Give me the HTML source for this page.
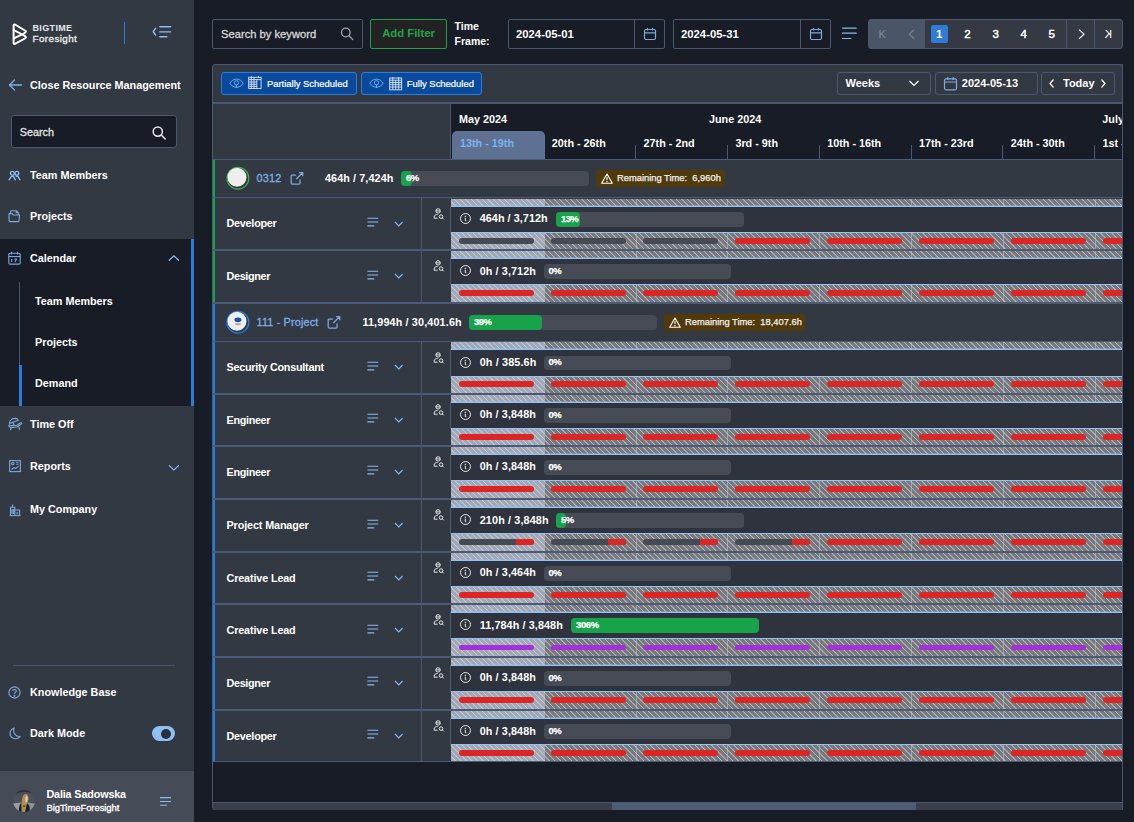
<!DOCTYPE html>
<html><head><meta charset="utf-8"><style>
html,body{margin:0;padding:0;width:1134px;height:822px;overflow:hidden;background:#171c26;font-family:"Liberation Sans", sans-serif;}
.t{position:absolute;white-space:pre;line-height:1;}
.r{position:absolute;}
</style></head><body>
<div class="r" style="left:0px;top:0px;width:194px;height:822px;background:#333943"></div><svg class="r" style="left:10.4px;top:20.6px;" width="19" height="26" viewBox="0 0 19 26"><g transform="translate(0,1.2) scale(1,0.92)" fill="none" stroke="#fff" stroke-width="2" stroke-linejoin="round" stroke-linecap="round"><path d="M3.6 3.4 C3.6 2.6 4.4 2.3 5 2.6 L15.3 9.2 C16.2 9.8 16.1 10.6 15.3 11.2 L12.3 13.3 L15.3 15.4 C16.1 16 16.1 16.8 15.3 17.4 L5 23.6 C4.3 24 3.6 23.6 3.6 22.8 Z"/><path d="M3.8 8.6 L12.3 13.3 L3.8 17.6"/></g></svg><div class="t" style="left:32.5px;top:23.78px;font-size:9px;font-weight:bold;color:#e8e8e8;letter-spacing:0.35px">BIGTIME</div><div class="t" style="left:32.5px;top:33.70px;font-size:9.8px;font-weight:normal;color:#e8e8e8;letter-spacing:0.438px;-webkit-text-stroke:0.35px #e8e8e8">Foresight</div><div class="r" style="left:124px;top:22px;width:1px;height:22px;background:#2f7bd6"></div><svg class="r" style="left:150px;top:24px;" width="24" height="15" viewBox="0 0 24 15"><g fill="none" stroke="#8ec0f5" stroke-width="1.4" stroke-linecap="round"><path d="M5.6 4.3 L3.2 7.7 L5.6 11"/><path d="M9.8 2.8 H20.6"/><path d="M9.8 7.9 H20.6"/><path d="M9.8 12.8 H16.8"/></g></svg><svg class="r" style="left:7px;top:78px;" width="17" height="14" viewBox="0 0 17 14"><g fill="none" stroke="#7eb0e6" stroke-width="1.3" stroke-linecap="round" stroke-linejoin="round"><path d="M2.5 7 H14.5"/><path d="M7.5 2 L2.5 7 L7.5 12"/></g></svg><div class="t" style="left:30px;top:80.26px;font-size:10.8px;font-weight:bold;color:#fff;">Close Resource Management</div><div class="r" style="left:11px;top:115px;width:166px;height:33px;background:#171c26;border:1px solid #4b5872;border-radius:3px;box-sizing:border-box"></div><div class="t" style="left:19.7px;top:126.86px;font-size:10.8px;font-weight:normal;color:#e6e6e6;-webkit-text-stroke:0.3px #e6e6e6">Search</div><svg class="r" style="left:150px;top:124px;" width="18" height="17" viewBox="0 0 18 17"><g fill="none" stroke="#e6e6e6" stroke-width="1.5" stroke-linecap="round"><circle cx="7.8" cy="7.6" r="4.6"/><path d="M11.2 11 L15.2 15"/></g></svg><svg class="r" style="left:8px;top:170px;" width="13" height="11" viewBox="0 0 13 11"><g fill="none" stroke="#8ec0f5" stroke-width="1.3" stroke-linecap="round"><circle cx="4.3" cy="3.2" r="1.9"/><circle cx="8.9" cy="3.2" r="1.9"/><path d="M1 9.8 L3.3 6.3 H5.3 L7.4 9.8"/><path d="M8.2 6.3 H9.9 L12 9.8"/></g></svg><div class="t" style="left:30px;top:170.06px;font-size:10.8px;font-weight:bold;color:#fff;">Team Members</div><svg class="r" style="left:8.3px;top:210px;" width="13" height="13" viewBox="0 0 13 13"><g fill="none" stroke="#7ea9dc" stroke-width="1.1" stroke-linejoin="round"><path d="M1 3.6 H4.2 L5.2 5 H11.6 L11 10.8 C10.9 11.3 10.6 11.6 10 11.6 H2 C1.4 11.6 1 11.2 1 10.6 Z"/><path d="M2.6 3.6 V1.6 C2.6 1 3 0.8 3.5 0.8 H8.4 L10.2 2.4 V5"/><path d="M8.2 0.8 V2.6 H10.2"/></g></svg><div class="t" style="left:30px;top:210.86px;font-size:10.8px;font-weight:bold;color:#fff;">Projects</div><div class="r" style="left:0px;top:239px;width:194px;height:167px;background:#171c26"></div><div class="r" style="left:191px;top:239px;width:3px;height:167px;background:#2f7bd6"></div><svg class="r" style="left:8px;top:251px;" width="13" height="14" viewBox="0 0 13 14"><g fill="none" stroke="#7ea9dc" stroke-width="1.1"><rect x="0.8" y="2.3" width="11.4" height="10.8" rx="1.2"/><path d="M0.8 5.5 H12.2"/><path d="M3.5 0.8 V3.5 M9.5 0.8 V3.5"/><path d="M3.7 8 V11 M6.2 8 H8.5 L7 11"/></g></svg><div class="t" style="left:30px;top:252.86px;font-size:10.8px;font-weight:bold;color:#fff;">Calendar</div><svg class="r" style="left:166px;top:253px;" width="15" height="9" viewBox="0 0 15 9"><path d="M3.2 7.3 L7.9 2.9 L12.6 7.3" fill="none" stroke="#86bbf0" stroke-width="1.2" stroke-linecap="round"/></svg><div class="r" style="left:19px;top:282px;width:1px;height:124px;background:#4b5872"></div><div class="r" style="left:19px;top:365px;width:3px;height:41px;background:#2f7bd6"></div><div class="t" style="left:35px;top:295.86px;font-size:10.8px;font-weight:bold;color:#fff;">Team Members</div><div class="t" style="left:35px;top:337.46px;font-size:10.8px;font-weight:bold;color:#fff;">Projects</div><div class="t" style="left:35px;top:377.86px;font-size:10.8px;font-weight:bold;color:#fff;">Demand</div><svg class="r" style="left:7.6px;top:417px;" width="15" height="14" viewBox="0 0 15 14"><g fill="none" stroke="#7ea9dc" stroke-width="1.1" stroke-linecap="round" stroke-linejoin="round"><path d="M1.5 6.5 C1.2 3 5 0.6 8.6 1.6 C9.8 2 10.3 2.8 10 3.6 Z"/><path d="M4.5 5.2 L6.2 8"/><path d="M0.8 8.3 C1.2 10.5 3 10.8 5 10.5 L9.5 9.8 L13.8 6.6 C13.5 5.8 12.8 5.6 12 6 L9 8.2 L4 8.6 C3 8.7 2 8.4 1.6 7.8"/><path d="M3 10.7 L2.6 12.8 M11 9.8 L11.4 12.4"/></g></svg><div class="t" style="left:30px;top:419.16px;font-size:10.8px;font-weight:bold;color:#fff;">Time Off</div><svg class="r" style="left:8.6px;top:460.2px;" width="13" height="13" viewBox="0 0 13 13"><g fill="none" stroke="#7ea9dc" stroke-width="1.1"><rect x="0.6" y="0.6" width="10.8" height="11"/><path d="M2.5 9.5 L4.8 7.6 L6.6 8.6 L9.5 6.2"/><circle cx="3.8" cy="3.5" r="1.2"/><path d="M7.3 2.5 H9.5 M7.3 4.3 H9.5"/></g></svg><div class="t" style="left:30px;top:460.86px;font-size:10.8px;font-weight:bold;color:#fff;">Reports</div><svg class="r" style="left:166px;top:462.6px;" width="15" height="9" viewBox="0 0 15 9"><path d="M3.2 2.6 L7.9 7 L12.6 2.6" fill="none" stroke="#86bbf0" stroke-width="1.2" stroke-linecap="round"/></svg><svg class="r" style="left:8.6px;top:503.6px;" width="13" height="13" viewBox="0 0 13 13"><g fill="none" stroke="#7ea9dc" stroke-width="1.1"><path d="M0.5 11.6 H11.5"/><path d="M1.5 11.6 V3.2 H5.8 V11.6"/><path d="M3.6 3.2 V0.6"/><path d="M5.8 6 H10.6 V11.6"/><path d="M3 5 V10 M4.4 5 V10 M8.2 8 V10.5"/></g></svg><div class="t" style="left:30px;top:503.86px;font-size:10.8px;font-weight:bold;color:#fff;">My Company</div><div class="r" style="left:13px;top:665px;width:162px;height:1px;background:#4b5872"></div><svg class="r" style="left:8px;top:686px;" width="13" height="13" viewBox="0 0 13 13"><g fill="none" stroke="#7ea9dc" stroke-width="1.1"><circle cx="6.5" cy="6.5" r="5.6"/><path d="M4.7 5 C4.7 3 8.3 3 8.3 5 C8.3 6.4 6.5 6.4 6.5 8"/><circle cx="6.5" cy="9.7" r="0.4" fill="#7ea9dc"/></g></svg><div class="t" style="left:30px;top:686.86px;font-size:10.8px;font-weight:bold;color:#fff;">Knowledge Base</div><svg class="r" style="left:8px;top:727px;" width="13" height="13" viewBox="0 0 13 13"><g fill="none" stroke="#7ea9dc" stroke-width="1.1"><path d="M6 1 C2 2 0.8 7 3.5 10.2 C6 12.8 10.5 12 12 9.5 C8 10 4.5 6 6 1 Z"/></g></svg><div class="t" style="left:30px;top:727.86px;font-size:10.8px;font-weight:bold;color:#fff;">Dark Mode</div><div class="r" style="left:152px;top:726px;width:23px;height:15px;background:#8ec0f5;border-radius:8px"></div><div class="r" style="left:161px;top:728.5px;width:10px;height:10px;background:#2b313b;border-radius:50%"></div><div class="r" style="left:0px;top:771px;width:194px;height:51px;background:#464c57"></div><svg class="r" style="left:13px;top:790px;" width="22" height="22" viewBox="0 0 22 22"><defs><clipPath id="av"><circle cx="11" cy="11" r="11"/></clipPath></defs><g clip-path="url(#av)"><rect width="22" height="22" fill="#4a4f59"/><path d="M2 4.5 C6 1.5 15 1 20 4 L20 0 L2 0 Z" fill="#2c3038"/><path d="M0 13.5 L7.5 12.5 L6.5 22 L0 22 Z" fill="#979da6"/><path d="M22 13.5 L14.5 12.5 L15.5 22 L22 22 Z" fill="#8d939b"/><path d="M5.5 22 L6.5 15.5 C7.5 13.5 9.5 13.5 10.5 14.5 L12.5 14.5 C14.5 13.5 16 14.5 16.5 16.5 L17 22 Z" fill="#1c1f25"/><path d="M12.5 4 C15 4 16 6.5 15.5 9.5 C15 12 13.5 14 13 18 L12 22 L8.5 22 L8.5 17 C8 14.5 8.6 12 9 9.5 C9.4 6.5 10.5 4.3 12.5 4 Z" fill="#ae9150"/><path d="M13.2 5.8 C14.8 6.5 15 9 14.3 11.2 C13.8 12.5 12.8 12.6 12.5 11.4 C12.1 9.5 12.3 7.3 13.2 5.8 Z" fill="#ddd0b4"/><rect x="10" y="15.5" width="2.5" height="1.3" fill="#7a2a1a"/></g></svg><div class="t" style="left:46.4px;top:788.86px;font-size:10.8px;font-weight:bold;color:#fff;letter-spacing:-0.146px;">Dalia Sadowska</div><div class="t" style="left:46.5px;top:802.96px;font-size:9.5px;font-weight:normal;color:#fff;letter-spacing:-0.080px;-webkit-text-stroke:0.3px #fff">BigTimeForesight</div><svg class="r" style="left:158px;top:795px;" width="15" height="12" viewBox="0 0 15 12"><g stroke="#86bbf0" stroke-width="1.1"><path d="M2 2.6 H13 M2 6.5 H13 M2 10.3 H9"/></g></svg><div class="r" style="left:212px;top:19px;width:151px;height:30px;border:1px solid #4b5872;border-radius:2px;box-sizing:border-box"></div><div class="t" style="left:221px;top:28.52px;font-size:11.2px;font-weight:normal;color:#d8d8d8;-webkit-text-stroke:0.3px #d8d8d8">Search by keyword</div><svg class="r" style="left:339px;top:26px;" width="16" height="16" viewBox="0 0 16 16"><g fill="none" stroke="#a0a4ab" stroke-width="1.3" stroke-linecap="round"><circle cx="6.8" cy="6.5" r="4.3"/><path d="M10 9.8 L13.8 13.6"/></g></svg><div class="r" style="left:370px;top:19px;width:77px;height:30px;background:#222222;border:1.5px solid #1fa04a;border-radius:2px;box-sizing:border-box"></div><div class="t" style="left:382.2px;top:27.53px;font-size:11.3px;font-weight:bold;color:#22a34a;">Add Filter</div><div class="t" style="left:454.6px;top:21.21px;font-size:10.5px;font-weight:bold;color:#fff;">Time</div><div class="t" style="left:454.6px;top:36.21px;font-size:10.5px;font-weight:bold;color:#fff;">Frame:</div><div class="r" style="left:508px;top:19px;width:157px;height:30px;border:1px solid #4b5872;border-radius:2px;box-sizing:border-box"></div><div class="r" style="left:634px;top:19px;width:1px;height:30px;background:#4b5872"></div><div class="t" style="left:516px;top:29.23px;font-size:11.3px;font-weight:bold;color:#fff;">2024-05-01</div><svg class="r" style="left:642.5px;top:27px;" width="14" height="14" viewBox="0 0 14 14"><g fill="none" stroke="#7ea9dc" stroke-width="1.2"><rect x="1.5" y="2.5" width="11" height="10" rx="1.5"/><path d="M1.5 5.8 H12.5 M4.5 1 V3.5 M9.5 1 V3.5"/></g></svg><div class="r" style="left:673px;top:19px;width:158px;height:30px;border:1px solid #4b5872;border-radius:2px;box-sizing:border-box"></div><div class="r" style="left:800px;top:19px;width:1px;height:30px;background:#4b5872"></div><div class="t" style="left:681px;top:29.23px;font-size:11.3px;font-weight:bold;color:#fff;">2024-05-31</div><svg class="r" style="left:808.5px;top:27px;" width="14" height="14" viewBox="0 0 14 14"><g fill="none" stroke="#7ea9dc" stroke-width="1.2"><rect x="1.5" y="2.5" width="11" height="10" rx="1.5"/><path d="M1.5 5.8 H12.5 M4.5 1 V3.5 M9.5 1 V3.5"/></g></svg><svg class="r" style="left:840px;top:25px;" width="18" height="16" viewBox="0 0 18 16"><g stroke="#86bbf0" stroke-width="1.2" stroke-linecap="round"><path d="M2.5 3.1 H16.2 M2.5 8.2 H16.2 M2.5 13.5 H11"/></g></svg><div class="r" style="left:868px;top:19px;width:255px;height:30px;background:#343944;border:1px solid #4b5872;border-radius:3px;box-sizing:border-box"></div><div class="r" style="left:869px;top:20px;width:56px;height:28px;background:#4a5568"></div><div class="t" style="left:878.5px;top:29.29px;font-size:11px;font-weight:normal;color:#858a90;">K</div><svg class="r" style="left:904px;top:27px;" width="14" height="14" viewBox="0 0 14 14"><path d="M10 3 L5.2 7.2 L10 11.5" fill="none" stroke="#7f868f" stroke-width="1.1"/></svg><div class="r" style="left:931px;top:25px;width:17px;height:18px;background:#2f7bd6;border-radius:2px"></div><div class="t" style="left:936px;top:29.07px;font-size:11.5px;font-weight:bold;color:#fff;">1</div><div class="t" style="left:964.3px;top:29.07px;font-size:11.5px;font-weight:normal;color:#fff;-webkit-text-stroke:0.45px #fff">2</div><div class="t" style="left:992.4px;top:29.07px;font-size:11.5px;font-weight:normal;color:#fff;-webkit-text-stroke:0.45px #fff">3</div><div class="t" style="left:1020.5px;top:29.07px;font-size:11.5px;font-weight:normal;color:#fff;-webkit-text-stroke:0.45px #fff">4</div><div class="t" style="left:1048.6px;top:29.07px;font-size:11.5px;font-weight:normal;color:#fff;-webkit-text-stroke:0.45px #fff">5</div><div class="r" style="left:1066px;top:20px;width:1px;height:28px;background:#4b5872"></div><div class="r" style="left:1094px;top:20px;width:1px;height:28px;background:#4b5872"></div><svg class="r" style="left:1073px;top:27px;" width="14" height="14" viewBox="0 0 14 14"><path d="M6 2.7 L11 7.2 L6 11.8" fill="none" stroke="#fff" stroke-width="1.1"/></svg><div class="t" style="left:1102px;top:29.29px;font-size:11px;font-weight:normal;color:#fff;transform:scaleX(-1);transform-origin:5px 0">K</div><div class="r" style="left:212px;top:64px;width:911px;height:746px;background:#333943;border:1px solid #4b5872;border-radius:3px;box-sizing:border-box"></div><div class="r" style="left:221px;top:72px;width:136px;height:23px;background:#0a4a9c;border:1px solid #2a7de0;border-radius:3px;box-sizing:border-box"></div><svg class="r" style="left:229.3px;top:78px;" width="15" height="11" viewBox="0 0 15 11"><g fill="none" stroke="#6aaaf0" stroke-width="1"><path d="M0.8 5.2 C4 -0.2 11 -0.2 14.2 5.2 C11 10.6 4 10.6 0.8 5.2 Z"/><circle cx="7.5" cy="4.8" r="2.1"/><path d="M7.5 6.9 V10"/></g></svg><svg class="r" style="left:247.8px;top:76.3px;" width="14" height="13" viewBox="0 0 14 13"><g fill="none" stroke="#dce6f5" stroke-width="0.9"><rect x="0.7" y="1.3" width="12.4" height="11.2"/><path d="M0.7 3.6 H13.1 M0.7 6 H8.8 M0.7 8.3 H8.8 M0.7 10.4 H8.8 M3.3 0.2 V12.5 M6 1.3 V12.5 M8.8 3.6 V12.5 M10.5 0.2 V2"/></g></svg><div class="t" style="left:266.9px;top:78.70px;font-size:9.45px;font-weight:normal;color:#fff;-webkit-text-stroke:0.2px #fff">Partially Scheduled</div><div class="r" style="left:360.5px;top:72px;width:121.5px;height:23px;background:#0a4a9c;border:1px solid #2a7de0;border-radius:3px;box-sizing:border-box"></div><svg class="r" style="left:369.3px;top:78px;" width="15" height="11" viewBox="0 0 15 11"><g fill="none" stroke="#6aaaf0" stroke-width="1"><path d="M0.8 5.2 C4 -0.2 11 -0.2 14.2 5.2 C11 10.6 4 10.6 0.8 5.2 Z"/><circle cx="7.5" cy="4.8" r="2.1"/><path d="M7.5 6.9 V10"/></g></svg><svg class="r" style="left:388.6px;top:77.3px;" width="14" height="13.5" viewBox="0 0 14 13.5"><g fill="none" stroke="#dce6f5" stroke-width="0.9"><rect x="0.7" y="1" width="12" height="11.8"/><path d="M0.7 3.2 H12.7 M0.7 5.5 H12.7 M0.7 7.7 H12.7 M0.7 10 H12.7 M3.8 0 V12.8 M6.7 3.2 V12.8 M9.7 0 V12.8"/></g></svg><div class="t" style="left:406.8px;top:78.70px;font-size:9.45px;font-weight:normal;color:#fff;-webkit-text-stroke:0.2px #fff">Fully Scheduled</div><div class="r" style="left:837px;top:72px;width:94px;height:23px;border:1px solid #4b5872;border-radius:3px;box-sizing:border-box"></div><div class="t" style="left:845.5px;top:78.19px;font-size:11px;font-weight:bold;color:#fff;">Weeks</div><svg class="r" style="left:907px;top:78px;" width="14" height="10" viewBox="0 0 14 10"><path d="M2.5 3 L7 7.5 L11.5 3" fill="none" stroke="#fff" stroke-width="1.2"/></svg><div class="r" style="left:935px;top:72px;width:103px;height:23px;border:1px solid #4b5872;border-radius:3px;box-sizing:border-box"></div><svg class="r" style="left:943px;top:76px;" width="15" height="15" viewBox="0 0 15 15"><g fill="none" stroke="#7ea9dc" stroke-width="1.2"><rect x="1.5" y="2.8" width="12" height="11" rx="1.5"/><path d="M1.5 6 H13.5 M4.8 1 V4 M10.2 1 V4"/></g></svg><div class="t" style="left:961.8px;top:78.19px;font-size:11px;font-weight:bold;color:#fff;">2024-05-13</div><div class="r" style="left:1041px;top:72px;width:74px;height:23px;border:1px solid #4b5872;border-radius:3px;box-sizing:border-box"></div><svg class="r" style="left:1046px;top:77px;" width="12" height="13" viewBox="0 0 12 13"><path d="M7.5 2.5 L4 6.5 L7.5 10.5" fill="none" stroke="#fff" stroke-width="1.2"/></svg><div class="t" style="left:1063px;top:78.19px;font-size:11px;font-weight:bold;color:#fff;">Today</div><svg class="r" style="left:1097px;top:77px;" width="12" height="13" viewBox="0 0 12 13"><path d="M4.5 2.5 L8 6.5 L4.5 10.5" fill="none" stroke="#fff" stroke-width="1.2"/></svg><div class="r" style="left:213px;top:102px;width:909px;height:2px;background:#4b5872"></div><div class="r" style="left:451px;top:104px;width:671px;height:55px;background:#171c26"></div><div class="r" style="left:450px;top:104px;width:1px;height:55px;background:#4b5872"></div><div class="r" style="left:213px;top:158.5px;width:909px;height:1px;background:#4b5872"></div><div class="t" style="left:459px;top:114.46px;font-size:10.8px;font-weight:bold;color:#fff;">May 2024</div><div class="t" style="left:709px;top:114.46px;font-size:10.8px;font-weight:bold;color:#fff;">June 2024</div><div class="t" style="left:1102.3px;top:114.46px;font-size:10.8px;font-weight:bold;color:#fff;">July</div><div class="r" style="left:452px;top:131px;width:93px;height:28px;background:#5f7193;border-radius:5px 5px 0 0"></div><div class="t" style="left:460.0px;top:137.86px;font-size:10.8px;font-weight:bold;color:#7ab4ee;">13th - 19th</div><div class="t" style="left:551.8px;top:137.86px;font-size:10.8px;font-weight:bold;color:#fff;">20th - 26th</div><div class="r" style="left:635.1px;top:145px;width:1px;height:14px;background:#4b5872"></div><div class="t" style="left:643.6px;top:137.86px;font-size:10.8px;font-weight:bold;color:#fff;">27th - 2nd</div><div class="r" style="left:726.9px;top:145px;width:1px;height:14px;background:#4b5872"></div><div class="t" style="left:735.4px;top:137.86px;font-size:10.8px;font-weight:bold;color:#fff;">3rd - 9th</div><div class="r" style="left:818.7px;top:145px;width:1px;height:14px;background:#4b5872"></div><div class="t" style="left:827.2px;top:137.86px;font-size:10.8px;font-weight:bold;color:#fff;">10th - 16th</div><div class="r" style="left:910.5px;top:145px;width:1px;height:14px;background:#4b5872"></div><div class="t" style="left:919.0px;top:137.86px;font-size:10.8px;font-weight:bold;color:#fff;">17th - 23rd</div><div class="r" style="left:1002.3px;top:145px;width:1px;height:14px;background:#4b5872"></div><div class="t" style="left:1010.8px;top:137.86px;font-size:10.8px;font-weight:bold;color:#fff;">24th - 30th</div><div class="r" style="left:1094.1px;top:145px;width:1px;height:14px;background:#4b5872"></div><div class="t" style="left:1102.6px;top:137.86px;font-size:10.8px;font-weight:bold;color:#fff;">1st - 7th</div><div class="r" style="left:213px;top:159px;width:909px;height:38.5px;background:#333943"></div><div class="r" style="left:212.5px;top:159px;width:2.5px;height:38.5px;background:#17a34a"></div><svg class="r" style="left:225px;top:165.25px;" width="26" height="26" viewBox="0 0 26 26"><circle cx="12.9" cy="13.2" r="10.9" fill="none" stroke="#3fb34a" stroke-width="1.1"/><circle cx="12" cy="12.2" r="9.5" fill="#eeefed"/></svg><div class="t" style="left:256.5px;top:172.81px;font-size:10.8px;font-weight:normal;color:#7eb0e6;letter-spacing:0.233px;-webkit-text-stroke:0.3px #7eb0e6">0312</div><div class="t" style="left:325px;top:172.81px;font-size:10.8px;font-weight:bold;color:#fff;letter-spacing:0.092px;">464h / 7,424h</div><div class="r" style="left:401px;top:171.05px;width:188px;height:15px;background:#464b56;border-radius:4px"></div><div class="r" style="left:401px;top:171.05px;width:11px;height:15px;background:#17a34a;border-radius:4px"></div><div class="t" style="left:406px;top:172.85px;font-size:9.45px;font-weight:bold;color:#fff;letter-spacing:-0.600px;-webkit-text-stroke:0.25px #fff">6%</div><div class="r" style="left:596px;top:170.25px;width:128.6px;height:16.5px;background:#503a0b;border-radius:3px"></div><svg class="r" style="left:601px;top:172.75px;" width="12" height="11" viewBox="0 0 12 11"><g fill="none" stroke="#fff" stroke-width="1.1" stroke-linejoin="round"><path d="M6 1 L11.3 10.3 H0.7 Z"/><path d="M6 4 V7"/><circle cx="6" cy="8.6" r="0.25" fill="#fff"/></g></svg><div class="t" style="left:617px;top:173.74px;font-size:9.35px;font-weight:normal;color:#f2f2f2;-webkit-text-stroke:0.25px #f2f2f2">Remaining Time:&nbsp; 6,960h</div><svg class="r" style="left:289.5px;top:170.5px;" width="14" height="14" viewBox="0 0 14 14"><g fill="none" stroke="#7ea9dc" stroke-width="1.25" stroke-linecap="round" stroke-linejoin="round"><path d="M5.5 4 H2.2 C1.6 4 1.2 4.4 1.2 5 V12 C1.2 12.6 1.6 13 2.2 13 H9 C9.6 13 10 12.6 10 12 V8.8"/><path d="M6.5 7.7 L12.5 1.8 M9.5 1.5 H12.8 V4.8"/></g></svg><div class="r" style="left:213px;top:197.9px;width:909px;height:52.1px;background:#333943"></div><div class="r" style="left:212.5px;top:197.9px;width:2.5px;height:52.1px;background:#17a34a"></div><div class="t" style="left:226.5px;top:218.16px;font-size:10.8px;font-weight:bold;color:#fff;letter-spacing:-0.237px;">Developer</div><svg class="r" style="left:366.6px;top:217.4px;" width="12" height="11" viewBox="0 0 12 11"><g stroke="#86bbf0" stroke-width="1.1"><path d="M0.4 1.2 H11.2 M0.4 5.05 H11.2 M0.4 8.9 H7.2"/></g></svg><svg class="r" style="left:394.2px;top:220.70000000000002px;" width="11" height="7" viewBox="0 0 11 7"><path d="M1 1 L4.8 4.9 L8.6 1" fill="none" stroke="#86bbf0" stroke-width="1.1"/></svg><div class="r" style="left:421px;top:197.9px;width:1px;height:52.1px;background:#4b5872"></div><div class="r" style="left:450.5px;top:197.9px;width:1px;height:52.1px;background:#4b5872"></div><svg class="r" style="left:433px;top:208.3px;" width="12" height="12" viewBox="0 0 12 12"><g fill="none" stroke="#e6e6e6" stroke-width="1"><circle cx="5.05" cy="2.9" r="2.2"/><path d="M2.9 2.9 H7.2"/><path d="M1.2 10.2 V9 C1.2 7.3 2.6 6.5 4.6 6.5"/><path d="M1.2 10.2 H4.6"/><circle cx="8" cy="8.6" r="1.8"/><path d="M9.3 9.9 L10.7 11.3"/></g></svg><div class="r" style="left:451px;top:198.65px;width:94px;height:7.1px;background:repeating-linear-gradient(45deg, #a0a8b7 0px, #a0a8b7 2.6px, #c6c9cf 3.0px, #c6c9cf 3.5px, #a0a8b7 3.93px)"></div><div class="r" style="left:545px;top:198.65px;width:577px;height:7.1px;background:repeating-linear-gradient(45deg, #76787d 0px, #76787d 2.6px, #b6b6b7 3.0px, #b6b6b7 3.5px, #76787d 3.93px)"></div><div class="r" style="left:635.6px;top:198.65px;width:1px;height:7.1px;background:rgba(200,212,235,0.45)"></div><div class="r" style="left:727.4px;top:198.65px;width:1px;height:7.1px;background:rgba(200,212,235,0.45)"></div><div class="r" style="left:819.2px;top:198.65px;width:1px;height:7.1px;background:rgba(200,212,235,0.45)"></div><div class="r" style="left:911.0px;top:198.65px;width:1px;height:7.1px;background:rgba(200,212,235,0.45)"></div><div class="r" style="left:1002.8px;top:198.65px;width:1px;height:7.1px;background:rgba(200,212,235,0.45)"></div><div class="r" style="left:1094.6px;top:198.65px;width:1px;height:7.1px;background:rgba(200,212,235,0.45)"></div><div class="r" style="left:451px;top:205.75px;width:671px;height:27.3px;background:#2e333d;border-top:1px solid #8ec3f8;border-bottom:1px solid #8ec3f8;box-sizing:border-box;box-shadow:0 -0.5px 0 0.3px rgba(142,195,248,0.5), 0 0.5px 0 0.3px rgba(142,195,248,0.5)"></div><div class="r" style="left:451px;top:233.05px;width:94px;height:16.200000000000003px;background:repeating-linear-gradient(45deg, #a0a8b7 0px, #a0a8b7 2.6px, #c6c9cf 3.0px, #c6c9cf 3.5px, #a0a8b7 3.93px)"></div><div class="r" style="left:545px;top:233.05px;width:577px;height:16.200000000000003px;background:repeating-linear-gradient(45deg, #76787d 0px, #76787d 2.6px, #b6b6b7 3.0px, #b6b6b7 3.5px, #76787d 3.93px)"></div><div class="r" style="left:635.6px;top:233.05px;width:1px;height:16.200000000000003px;background:rgba(200,212,235,0.45)"></div><div class="r" style="left:727.4px;top:233.05px;width:1px;height:16.200000000000003px;background:rgba(200,212,235,0.45)"></div><div class="r" style="left:819.2px;top:233.05px;width:1px;height:16.200000000000003px;background:rgba(200,212,235,0.45)"></div><div class="r" style="left:911.0px;top:233.05px;width:1px;height:16.200000000000003px;background:rgba(200,212,235,0.45)"></div><div class="r" style="left:1002.8px;top:233.05px;width:1px;height:16.200000000000003px;background:rgba(200,212,235,0.45)"></div><div class="r" style="left:1094.6px;top:233.05px;width:1px;height:16.200000000000003px;background:rgba(200,212,235,0.45)"></div><svg class="r" style="left:459px;top:212.3px;" width="13" height="13" viewBox="0 0 13 13"><g fill="none" stroke="#e8e8e8" stroke-width="1"><circle cx="6.5" cy="6.5" r="5"/><path d="M6.3 5.8 V8.6 L7.3 8.8"/><circle cx="6.3" cy="4.3" r="0.35" fill="#e8e8e8"/></g></svg><div class="t" style="left:479.7px;top:213.46px;font-size:10.8px;font-weight:bold;color:#fff;letter-spacing:0.058px;">464h / 3,712h</div><div class="r" style="left:556px;top:212.1px;width:187.5px;height:14.6px;background:#464b56;border-radius:4px"></div><div class="r" style="left:556px;top:212.1px;width:24px;height:14.6px;background:#17a34a;border-radius:4px"></div><div class="t" style="left:561px;top:213.90px;font-size:9.45px;font-weight:bold;color:#fff;letter-spacing:-0.600px;-webkit-text-stroke:0.25px #fff">13%</div><div class="r" style="left:458.8px;top:237.9px;width:75.2px;height:6px;background:#454a55;border-radius:3px"></div><div class="r" style="left:550.8px;top:237.9px;width:75.2px;height:6px;background:#454a55;border-radius:3px"></div><div class="r" style="left:642.8px;top:237.9px;width:75.2px;height:6px;background:#454a55;border-radius:3px"></div><div class="r" style="left:734.8px;top:237.9px;width:75.2px;height:6px;background:#dc2626;border-radius:3px"></div><div class="r" style="left:826.8px;top:237.9px;width:75.2px;height:6px;background:#dc2626;border-radius:3px"></div><div class="r" style="left:918.8px;top:237.9px;width:75.2px;height:6px;background:#dc2626;border-radius:3px"></div><div class="r" style="left:1010.8px;top:237.9px;width:75.2px;height:6px;background:#dc2626;border-radius:3px"></div><div class="r" style="left:1102.8px;top:237.9px;width:19.200000000000045px;height:6px;background:#dc2626;border-radius:3px 0 0 3px"></div><div class="r" style="left:213px;top:250px;width:909px;height:52.9px;background:#333943"></div><div class="r" style="left:212.5px;top:250px;width:2.5px;height:52.9px;background:#17a34a"></div><div class="t" style="left:226.5px;top:270.86px;font-size:10.8px;font-weight:bold;color:#fff;letter-spacing:-0.314px;">Designer</div><svg class="r" style="left:366.6px;top:269.5px;" width="12" height="11" viewBox="0 0 12 11"><g stroke="#86bbf0" stroke-width="1.1"><path d="M0.4 1.2 H11.2 M0.4 5.05 H11.2 M0.4 8.9 H7.2"/></g></svg><svg class="r" style="left:394.2px;top:272.8px;" width="11" height="7" viewBox="0 0 11 7"><path d="M1 1 L4.8 4.9 L8.6 1" fill="none" stroke="#86bbf0" stroke-width="1.1"/></svg><div class="r" style="left:421px;top:250px;width:1px;height:52.9px;background:#4b5872"></div><div class="r" style="left:450.5px;top:250px;width:1px;height:52.9px;background:#4b5872"></div><svg class="r" style="left:433px;top:260.4px;" width="12" height="12" viewBox="0 0 12 12"><g fill="none" stroke="#e6e6e6" stroke-width="1"><circle cx="5.05" cy="2.9" r="2.2"/><path d="M2.9 2.9 H7.2"/><path d="M1.2 10.2 V9 C1.2 7.3 2.6 6.5 4.6 6.5"/><path d="M1.2 10.2 H4.6"/><circle cx="8" cy="8.6" r="1.8"/><path d="M9.3 9.9 L10.7 11.3"/></g></svg><div class="r" style="left:451px;top:250.75px;width:94px;height:7.1px;background:repeating-linear-gradient(45deg, #a0a8b7 0px, #a0a8b7 2.6px, #c6c9cf 3.0px, #c6c9cf 3.5px, #a0a8b7 3.93px)"></div><div class="r" style="left:545px;top:250.75px;width:577px;height:7.1px;background:repeating-linear-gradient(45deg, #76787d 0px, #76787d 2.6px, #b6b6b7 3.0px, #b6b6b7 3.5px, #76787d 3.93px)"></div><div class="r" style="left:635.6px;top:250.75px;width:1px;height:7.1px;background:rgba(200,212,235,0.45)"></div><div class="r" style="left:727.4px;top:250.75px;width:1px;height:7.1px;background:rgba(200,212,235,0.45)"></div><div class="r" style="left:819.2px;top:250.75px;width:1px;height:7.1px;background:rgba(200,212,235,0.45)"></div><div class="r" style="left:911.0px;top:250.75px;width:1px;height:7.1px;background:rgba(200,212,235,0.45)"></div><div class="r" style="left:1002.8px;top:250.75px;width:1px;height:7.1px;background:rgba(200,212,235,0.45)"></div><div class="r" style="left:1094.6px;top:250.75px;width:1px;height:7.1px;background:rgba(200,212,235,0.45)"></div><div class="r" style="left:451px;top:257.85px;width:671px;height:27.3px;background:#2e333d;border-top:1px solid #8ec3f8;border-bottom:1px solid #8ec3f8;box-sizing:border-box;box-shadow:0 -0.5px 0 0.3px rgba(142,195,248,0.5), 0 0.5px 0 0.3px rgba(142,195,248,0.5)"></div><div class="r" style="left:451px;top:285.15px;width:94px;height:17.0px;background:repeating-linear-gradient(45deg, #a0a8b7 0px, #a0a8b7 2.6px, #c6c9cf 3.0px, #c6c9cf 3.5px, #a0a8b7 3.93px)"></div><div class="r" style="left:545px;top:285.15px;width:577px;height:17.0px;background:repeating-linear-gradient(45deg, #76787d 0px, #76787d 2.6px, #b6b6b7 3.0px, #b6b6b7 3.5px, #76787d 3.93px)"></div><div class="r" style="left:635.6px;top:285.15px;width:1px;height:17.0px;background:rgba(200,212,235,0.45)"></div><div class="r" style="left:727.4px;top:285.15px;width:1px;height:17.0px;background:rgba(200,212,235,0.45)"></div><div class="r" style="left:819.2px;top:285.15px;width:1px;height:17.0px;background:rgba(200,212,235,0.45)"></div><div class="r" style="left:911.0px;top:285.15px;width:1px;height:17.0px;background:rgba(200,212,235,0.45)"></div><div class="r" style="left:1002.8px;top:285.15px;width:1px;height:17.0px;background:rgba(200,212,235,0.45)"></div><div class="r" style="left:1094.6px;top:285.15px;width:1px;height:17.0px;background:rgba(200,212,235,0.45)"></div><svg class="r" style="left:459px;top:264.4px;" width="13" height="13" viewBox="0 0 13 13"><g fill="none" stroke="#e8e8e8" stroke-width="1"><circle cx="6.5" cy="6.5" r="5"/><path d="M6.3 5.8 V8.6 L7.3 8.8"/><circle cx="6.3" cy="4.3" r="0.35" fill="#e8e8e8"/></g></svg><div class="t" style="left:479.7px;top:265.56px;font-size:10.8px;font-weight:bold;color:#fff;letter-spacing:0.100px;">0h / 3,712h</div><div class="r" style="left:543.5px;top:264.2px;width:187.5px;height:14.6px;background:#464b56;border-radius:4px"></div><div class="t" style="left:548.5px;top:266.00px;font-size:9.45px;font-weight:bold;color:#fff;letter-spacing:-0.600px;-webkit-text-stroke:0.25px #fff">0%</div><div class="r" style="left:458.8px;top:290px;width:75.2px;height:6px;background:#dc2626;border-radius:3px"></div><div class="r" style="left:550.8px;top:290px;width:75.2px;height:6px;background:#dc2626;border-radius:3px"></div><div class="r" style="left:642.8px;top:290px;width:75.2px;height:6px;background:#dc2626;border-radius:3px"></div><div class="r" style="left:734.8px;top:290px;width:75.2px;height:6px;background:#dc2626;border-radius:3px"></div><div class="r" style="left:826.8px;top:290px;width:75.2px;height:6px;background:#dc2626;border-radius:3px"></div><div class="r" style="left:918.8px;top:290px;width:75.2px;height:6px;background:#dc2626;border-radius:3px"></div><div class="r" style="left:1010.8px;top:290px;width:75.2px;height:6px;background:#dc2626;border-radius:3px"></div><div class="r" style="left:1102.8px;top:290px;width:19.200000000000045px;height:6px;background:#dc2626;border-radius:3px 0 0 3px"></div><div class="r" style="left:213px;top:302.9px;width:909px;height:38.55px;background:#333943"></div><div class="r" style="left:212.5px;top:302.9px;width:2.5px;height:38.55px;background:#1f7de6"></div><svg class="r" style="left:225px;top:309.17499999999995px;" width="26" height="26" viewBox="0 0 26 26"><circle cx="12.9" cy="13.2" r="10.9" fill="none" stroke="#1f7de6" stroke-width="1.3"/><circle cx="12" cy="12.2" r="9.5" fill="#eeefed"/><ellipse cx="12.9" cy="10.8" rx="3.5" ry="2.4" fill="#1b4fb5"/><rect x="10.3" y="14.3" width="5.5" height="1.8" fill="#a8aaad"/></svg><div class="t" style="left:256.5px;top:316.73px;font-size:10.8px;font-weight:normal;color:#7eb0e6;letter-spacing:0.183px;-webkit-text-stroke:0.3px #7eb0e6">111 - Project</div><div class="t" style="left:362.4px;top:316.73px;font-size:10.8px;font-weight:bold;color:#fff;letter-spacing:0.144px;">11,994h / 30,401.6h</div><div class="r" style="left:469px;top:314.97499999999997px;width:188px;height:15px;background:#464b56;border-radius:4px"></div><div class="r" style="left:469px;top:314.97499999999997px;width:73px;height:15px;background:#17a34a;border-radius:4px"></div><div class="t" style="left:474px;top:316.78px;font-size:9.45px;font-weight:bold;color:#fff;letter-spacing:-0.500px;-webkit-text-stroke:0.25px #fff">39%</div><div class="r" style="left:664px;top:314.17499999999995px;width:140.5px;height:16.5px;background:#503a0b;border-radius:3px"></div><svg class="r" style="left:669px;top:316.67499999999995px;" width="12" height="11" viewBox="0 0 12 11"><g fill="none" stroke="#fff" stroke-width="1.1" stroke-linejoin="round"><path d="M6 1 L11.3 10.3 H0.7 Z"/><path d="M6 4 V7"/><circle cx="6" cy="8.6" r="0.25" fill="#fff"/></g></svg><div class="t" style="left:685px;top:317.66px;font-size:9.35px;font-weight:normal;color:#f2f2f2;-webkit-text-stroke:0.25px #f2f2f2">Remaining Time:&nbsp; 18,407.6h</div><svg class="r" style="left:326.5px;top:314.9px;" width="14" height="14" viewBox="0 0 14 14"><g fill="none" stroke="#7ea9dc" stroke-width="1.25" stroke-linecap="round" stroke-linejoin="round"><path d="M5.5 4 H2.2 C1.6 4 1.2 4.4 1.2 5 V12 C1.2 12.6 1.6 13 2.2 13 H9 C9.6 13 10 12.6 10 12 V8.8"/><path d="M6.5 7.7 L12.5 1.8 M9.5 1.5 H12.8 V4.8"/></g></svg><div class="r" style="left:213px;top:341.45px;width:909px;height:52.44999999999999px;background:#333943"></div><div class="r" style="left:212.5px;top:341.45px;width:2.5px;height:52.44999999999999px;background:#1f7de6"></div><div class="t" style="left:226.5px;top:362.31px;font-size:10.8px;font-weight:bold;color:#fff;letter-spacing:-0.239px;">Security Consultant</div><svg class="r" style="left:366.6px;top:360.95px;" width="12" height="11" viewBox="0 0 12 11"><g stroke="#86bbf0" stroke-width="1.1"><path d="M0.4 1.2 H11.2 M0.4 5.05 H11.2 M0.4 8.9 H7.2"/></g></svg><svg class="r" style="left:394.2px;top:364.25px;" width="11" height="7" viewBox="0 0 11 7"><path d="M1 1 L4.8 4.9 L8.6 1" fill="none" stroke="#86bbf0" stroke-width="1.1"/></svg><div class="r" style="left:421px;top:341.45px;width:1px;height:52.44999999999999px;background:#4b5872"></div><div class="r" style="left:450.5px;top:341.45px;width:1px;height:52.44999999999999px;background:#4b5872"></div><svg class="r" style="left:433px;top:351.84999999999997px;" width="12" height="12" viewBox="0 0 12 12"><g fill="none" stroke="#e6e6e6" stroke-width="1"><circle cx="5.05" cy="2.9" r="2.2"/><path d="M2.9 2.9 H7.2"/><path d="M1.2 10.2 V9 C1.2 7.3 2.6 6.5 4.6 6.5"/><path d="M1.2 10.2 H4.6"/><circle cx="8" cy="8.6" r="1.8"/><path d="M9.3 9.9 L10.7 11.3"/></g></svg><div class="r" style="left:451px;top:342.2px;width:94px;height:7.1px;background:repeating-linear-gradient(45deg, #a0a8b7 0px, #a0a8b7 2.6px, #c6c9cf 3.0px, #c6c9cf 3.5px, #a0a8b7 3.93px)"></div><div class="r" style="left:545px;top:342.2px;width:577px;height:7.1px;background:repeating-linear-gradient(45deg, #76787d 0px, #76787d 2.6px, #b6b6b7 3.0px, #b6b6b7 3.5px, #76787d 3.93px)"></div><div class="r" style="left:635.6px;top:342.2px;width:1px;height:7.1px;background:rgba(200,212,235,0.45)"></div><div class="r" style="left:727.4px;top:342.2px;width:1px;height:7.1px;background:rgba(200,212,235,0.45)"></div><div class="r" style="left:819.2px;top:342.2px;width:1px;height:7.1px;background:rgba(200,212,235,0.45)"></div><div class="r" style="left:911.0px;top:342.2px;width:1px;height:7.1px;background:rgba(200,212,235,0.45)"></div><div class="r" style="left:1002.8px;top:342.2px;width:1px;height:7.1px;background:rgba(200,212,235,0.45)"></div><div class="r" style="left:1094.6px;top:342.2px;width:1px;height:7.1px;background:rgba(200,212,235,0.45)"></div><div class="r" style="left:451px;top:349.3px;width:671px;height:27.3px;background:#2e333d;border-top:1px solid #8ec3f8;border-bottom:1px solid #8ec3f8;box-sizing:border-box;box-shadow:0 -0.5px 0 0.3px rgba(142,195,248,0.5), 0 0.5px 0 0.3px rgba(142,195,248,0.5)"></div><div class="r" style="left:451px;top:376.59999999999997px;width:94px;height:16.54999999999999px;background:repeating-linear-gradient(45deg, #a0a8b7 0px, #a0a8b7 2.6px, #c6c9cf 3.0px, #c6c9cf 3.5px, #a0a8b7 3.93px)"></div><div class="r" style="left:545px;top:376.59999999999997px;width:577px;height:16.54999999999999px;background:repeating-linear-gradient(45deg, #76787d 0px, #76787d 2.6px, #b6b6b7 3.0px, #b6b6b7 3.5px, #76787d 3.93px)"></div><div class="r" style="left:635.6px;top:376.59999999999997px;width:1px;height:16.54999999999999px;background:rgba(200,212,235,0.45)"></div><div class="r" style="left:727.4px;top:376.59999999999997px;width:1px;height:16.54999999999999px;background:rgba(200,212,235,0.45)"></div><div class="r" style="left:819.2px;top:376.59999999999997px;width:1px;height:16.54999999999999px;background:rgba(200,212,235,0.45)"></div><div class="r" style="left:911.0px;top:376.59999999999997px;width:1px;height:16.54999999999999px;background:rgba(200,212,235,0.45)"></div><div class="r" style="left:1002.8px;top:376.59999999999997px;width:1px;height:16.54999999999999px;background:rgba(200,212,235,0.45)"></div><div class="r" style="left:1094.6px;top:376.59999999999997px;width:1px;height:16.54999999999999px;background:rgba(200,212,235,0.45)"></div><svg class="r" style="left:459px;top:355.84999999999997px;" width="13" height="13" viewBox="0 0 13 13"><g fill="none" stroke="#e8e8e8" stroke-width="1"><circle cx="6.5" cy="6.5" r="5"/><path d="M6.3 5.8 V8.6 L7.3 8.8"/><circle cx="6.3" cy="4.3" r="0.35" fill="#e8e8e8"/></g></svg><div class="t" style="left:479.7px;top:357.01px;font-size:10.8px;font-weight:bold;color:#fff;letter-spacing:0.140px;">0h / 385.6h</div><div class="r" style="left:543.5px;top:355.65px;width:187.5px;height:14.6px;background:#464b56;border-radius:4px"></div><div class="t" style="left:548.5px;top:357.45px;font-size:9.45px;font-weight:bold;color:#fff;letter-spacing:-0.600px;-webkit-text-stroke:0.25px #fff">0%</div><div class="r" style="left:458.8px;top:381.45px;width:75.2px;height:6px;background:#dc2626;border-radius:3px"></div><div class="r" style="left:550.8px;top:381.45px;width:75.2px;height:6px;background:#dc2626;border-radius:3px"></div><div class="r" style="left:642.8px;top:381.45px;width:75.2px;height:6px;background:#dc2626;border-radius:3px"></div><div class="r" style="left:734.8px;top:381.45px;width:75.2px;height:6px;background:#dc2626;border-radius:3px"></div><div class="r" style="left:826.8px;top:381.45px;width:75.2px;height:6px;background:#dc2626;border-radius:3px"></div><div class="r" style="left:918.8px;top:381.45px;width:75.2px;height:6px;background:#dc2626;border-radius:3px"></div><div class="r" style="left:1010.8px;top:381.45px;width:75.2px;height:6px;background:#dc2626;border-radius:3px"></div><div class="r" style="left:1102.8px;top:381.45px;width:19.200000000000045px;height:6px;background:#dc2626;border-radius:3px 0 0 3px"></div><div class="r" style="left:213px;top:393.9px;width:909px;height:52.0px;background:#333943"></div><div class="r" style="left:212.5px;top:393.9px;width:2.5px;height:52.0px;background:#1f7de6"></div><div class="t" style="left:226.5px;top:414.76px;font-size:10.8px;font-weight:bold;color:#fff;letter-spacing:-0.314px;">Engineer</div><svg class="r" style="left:366.6px;top:413.4px;" width="12" height="11" viewBox="0 0 12 11"><g stroke="#86bbf0" stroke-width="1.1"><path d="M0.4 1.2 H11.2 M0.4 5.05 H11.2 M0.4 8.9 H7.2"/></g></svg><svg class="r" style="left:394.2px;top:416.7px;" width="11" height="7" viewBox="0 0 11 7"><path d="M1 1 L4.8 4.9 L8.6 1" fill="none" stroke="#86bbf0" stroke-width="1.1"/></svg><div class="r" style="left:421px;top:393.9px;width:1px;height:52.0px;background:#4b5872"></div><div class="r" style="left:450.5px;top:393.9px;width:1px;height:52.0px;background:#4b5872"></div><svg class="r" style="left:433px;top:404.29999999999995px;" width="12" height="12" viewBox="0 0 12 12"><g fill="none" stroke="#e6e6e6" stroke-width="1"><circle cx="5.05" cy="2.9" r="2.2"/><path d="M2.9 2.9 H7.2"/><path d="M1.2 10.2 V9 C1.2 7.3 2.6 6.5 4.6 6.5"/><path d="M1.2 10.2 H4.6"/><circle cx="8" cy="8.6" r="1.8"/><path d="M9.3 9.9 L10.7 11.3"/></g></svg><div class="r" style="left:451px;top:394.65px;width:94px;height:7.1px;background:repeating-linear-gradient(45deg, #a0a8b7 0px, #a0a8b7 2.6px, #c6c9cf 3.0px, #c6c9cf 3.5px, #a0a8b7 3.93px)"></div><div class="r" style="left:545px;top:394.65px;width:577px;height:7.1px;background:repeating-linear-gradient(45deg, #76787d 0px, #76787d 2.6px, #b6b6b7 3.0px, #b6b6b7 3.5px, #76787d 3.93px)"></div><div class="r" style="left:635.6px;top:394.65px;width:1px;height:7.1px;background:rgba(200,212,235,0.45)"></div><div class="r" style="left:727.4px;top:394.65px;width:1px;height:7.1px;background:rgba(200,212,235,0.45)"></div><div class="r" style="left:819.2px;top:394.65px;width:1px;height:7.1px;background:rgba(200,212,235,0.45)"></div><div class="r" style="left:911.0px;top:394.65px;width:1px;height:7.1px;background:rgba(200,212,235,0.45)"></div><div class="r" style="left:1002.8px;top:394.65px;width:1px;height:7.1px;background:rgba(200,212,235,0.45)"></div><div class="r" style="left:1094.6px;top:394.65px;width:1px;height:7.1px;background:rgba(200,212,235,0.45)"></div><div class="r" style="left:451px;top:401.75px;width:671px;height:27.3px;background:#2e333d;border-top:1px solid #8ec3f8;border-bottom:1px solid #8ec3f8;box-sizing:border-box;box-shadow:0 -0.5px 0 0.3px rgba(142,195,248,0.5), 0 0.5px 0 0.3px rgba(142,195,248,0.5)"></div><div class="r" style="left:451px;top:429.04999999999995px;width:94px;height:16.1px;background:repeating-linear-gradient(45deg, #a0a8b7 0px, #a0a8b7 2.6px, #c6c9cf 3.0px, #c6c9cf 3.5px, #a0a8b7 3.93px)"></div><div class="r" style="left:545px;top:429.04999999999995px;width:577px;height:16.1px;background:repeating-linear-gradient(45deg, #76787d 0px, #76787d 2.6px, #b6b6b7 3.0px, #b6b6b7 3.5px, #76787d 3.93px)"></div><div class="r" style="left:635.6px;top:429.04999999999995px;width:1px;height:16.1px;background:rgba(200,212,235,0.45)"></div><div class="r" style="left:727.4px;top:429.04999999999995px;width:1px;height:16.1px;background:rgba(200,212,235,0.45)"></div><div class="r" style="left:819.2px;top:429.04999999999995px;width:1px;height:16.1px;background:rgba(200,212,235,0.45)"></div><div class="r" style="left:911.0px;top:429.04999999999995px;width:1px;height:16.1px;background:rgba(200,212,235,0.45)"></div><div class="r" style="left:1002.8px;top:429.04999999999995px;width:1px;height:16.1px;background:rgba(200,212,235,0.45)"></div><div class="r" style="left:1094.6px;top:429.04999999999995px;width:1px;height:16.1px;background:rgba(200,212,235,0.45)"></div><svg class="r" style="left:459px;top:408.29999999999995px;" width="13" height="13" viewBox="0 0 13 13"><g fill="none" stroke="#e8e8e8" stroke-width="1"><circle cx="6.5" cy="6.5" r="5"/><path d="M6.3 5.8 V8.6 L7.3 8.8"/><circle cx="6.3" cy="4.3" r="0.35" fill="#e8e8e8"/></g></svg><div class="t" style="left:479.7px;top:409.46px;font-size:10.8px;font-weight:bold;color:#fff;letter-spacing:0.100px;">0h / 3,848h</div><div class="r" style="left:543.5px;top:408.09999999999997px;width:187.5px;height:14.6px;background:#464b56;border-radius:4px"></div><div class="t" style="left:548.5px;top:409.90px;font-size:9.45px;font-weight:bold;color:#fff;letter-spacing:-0.600px;-webkit-text-stroke:0.25px #fff">0%</div><div class="r" style="left:458.8px;top:433.9px;width:75.2px;height:6px;background:#dc2626;border-radius:3px"></div><div class="r" style="left:550.8px;top:433.9px;width:75.2px;height:6px;background:#dc2626;border-radius:3px"></div><div class="r" style="left:642.8px;top:433.9px;width:75.2px;height:6px;background:#dc2626;border-radius:3px"></div><div class="r" style="left:734.8px;top:433.9px;width:75.2px;height:6px;background:#dc2626;border-radius:3px"></div><div class="r" style="left:826.8px;top:433.9px;width:75.2px;height:6px;background:#dc2626;border-radius:3px"></div><div class="r" style="left:918.8px;top:433.9px;width:75.2px;height:6px;background:#dc2626;border-radius:3px"></div><div class="r" style="left:1010.8px;top:433.9px;width:75.2px;height:6px;background:#dc2626;border-radius:3px"></div><div class="r" style="left:1102.8px;top:433.9px;width:19.200000000000045px;height:6px;background:#dc2626;border-radius:3px 0 0 3px"></div><div class="r" style="left:213px;top:445.9px;width:909px;height:53.10000000000002px;background:#333943"></div><div class="r" style="left:212.5px;top:445.9px;width:2.5px;height:53.10000000000002px;background:#1f7de6"></div><div class="t" style="left:226.5px;top:466.76px;font-size:10.8px;font-weight:bold;color:#fff;letter-spacing:-0.314px;">Engineer</div><svg class="r" style="left:366.6px;top:465.4px;" width="12" height="11" viewBox="0 0 12 11"><g stroke="#86bbf0" stroke-width="1.1"><path d="M0.4 1.2 H11.2 M0.4 5.05 H11.2 M0.4 8.9 H7.2"/></g></svg><svg class="r" style="left:394.2px;top:468.7px;" width="11" height="7" viewBox="0 0 11 7"><path d="M1 1 L4.8 4.9 L8.6 1" fill="none" stroke="#86bbf0" stroke-width="1.1"/></svg><div class="r" style="left:421px;top:445.9px;width:1px;height:53.10000000000002px;background:#4b5872"></div><div class="r" style="left:450.5px;top:445.9px;width:1px;height:53.10000000000002px;background:#4b5872"></div><svg class="r" style="left:433px;top:456.29999999999995px;" width="12" height="12" viewBox="0 0 12 12"><g fill="none" stroke="#e6e6e6" stroke-width="1"><circle cx="5.05" cy="2.9" r="2.2"/><path d="M2.9 2.9 H7.2"/><path d="M1.2 10.2 V9 C1.2 7.3 2.6 6.5 4.6 6.5"/><path d="M1.2 10.2 H4.6"/><circle cx="8" cy="8.6" r="1.8"/><path d="M9.3 9.9 L10.7 11.3"/></g></svg><div class="r" style="left:451px;top:446.65px;width:94px;height:7.1px;background:repeating-linear-gradient(45deg, #a0a8b7 0px, #a0a8b7 2.6px, #c6c9cf 3.0px, #c6c9cf 3.5px, #a0a8b7 3.93px)"></div><div class="r" style="left:545px;top:446.65px;width:577px;height:7.1px;background:repeating-linear-gradient(45deg, #76787d 0px, #76787d 2.6px, #b6b6b7 3.0px, #b6b6b7 3.5px, #76787d 3.93px)"></div><div class="r" style="left:635.6px;top:446.65px;width:1px;height:7.1px;background:rgba(200,212,235,0.45)"></div><div class="r" style="left:727.4px;top:446.65px;width:1px;height:7.1px;background:rgba(200,212,235,0.45)"></div><div class="r" style="left:819.2px;top:446.65px;width:1px;height:7.1px;background:rgba(200,212,235,0.45)"></div><div class="r" style="left:911.0px;top:446.65px;width:1px;height:7.1px;background:rgba(200,212,235,0.45)"></div><div class="r" style="left:1002.8px;top:446.65px;width:1px;height:7.1px;background:rgba(200,212,235,0.45)"></div><div class="r" style="left:1094.6px;top:446.65px;width:1px;height:7.1px;background:rgba(200,212,235,0.45)"></div><div class="r" style="left:451px;top:453.75px;width:671px;height:27.3px;background:#2e333d;border-top:1px solid #8ec3f8;border-bottom:1px solid #8ec3f8;box-sizing:border-box;box-shadow:0 -0.5px 0 0.3px rgba(142,195,248,0.5), 0 0.5px 0 0.3px rgba(142,195,248,0.5)"></div><div class="r" style="left:451px;top:481.04999999999995px;width:94px;height:17.200000000000024px;background:repeating-linear-gradient(45deg, #a0a8b7 0px, #a0a8b7 2.6px, #c6c9cf 3.0px, #c6c9cf 3.5px, #a0a8b7 3.93px)"></div><div class="r" style="left:545px;top:481.04999999999995px;width:577px;height:17.200000000000024px;background:repeating-linear-gradient(45deg, #76787d 0px, #76787d 2.6px, #b6b6b7 3.0px, #b6b6b7 3.5px, #76787d 3.93px)"></div><div class="r" style="left:635.6px;top:481.04999999999995px;width:1px;height:17.200000000000024px;background:rgba(200,212,235,0.45)"></div><div class="r" style="left:727.4px;top:481.04999999999995px;width:1px;height:17.200000000000024px;background:rgba(200,212,235,0.45)"></div><div class="r" style="left:819.2px;top:481.04999999999995px;width:1px;height:17.200000000000024px;background:rgba(200,212,235,0.45)"></div><div class="r" style="left:911.0px;top:481.04999999999995px;width:1px;height:17.200000000000024px;background:rgba(200,212,235,0.45)"></div><div class="r" style="left:1002.8px;top:481.04999999999995px;width:1px;height:17.200000000000024px;background:rgba(200,212,235,0.45)"></div><div class="r" style="left:1094.6px;top:481.04999999999995px;width:1px;height:17.200000000000024px;background:rgba(200,212,235,0.45)"></div><svg class="r" style="left:459px;top:460.29999999999995px;" width="13" height="13" viewBox="0 0 13 13"><g fill="none" stroke="#e8e8e8" stroke-width="1"><circle cx="6.5" cy="6.5" r="5"/><path d="M6.3 5.8 V8.6 L7.3 8.8"/><circle cx="6.3" cy="4.3" r="0.35" fill="#e8e8e8"/></g></svg><div class="t" style="left:479.7px;top:461.46px;font-size:10.8px;font-weight:bold;color:#fff;letter-spacing:0.100px;">0h / 3,848h</div><div class="r" style="left:543.5px;top:460.09999999999997px;width:187.5px;height:14.6px;background:#464b56;border-radius:4px"></div><div class="t" style="left:548.5px;top:461.90px;font-size:9.45px;font-weight:bold;color:#fff;letter-spacing:-0.600px;-webkit-text-stroke:0.25px #fff">0%</div><div class="r" style="left:458.8px;top:485.9px;width:75.2px;height:6px;background:#dc2626;border-radius:3px"></div><div class="r" style="left:550.8px;top:485.9px;width:75.2px;height:6px;background:#dc2626;border-radius:3px"></div><div class="r" style="left:642.8px;top:485.9px;width:75.2px;height:6px;background:#dc2626;border-radius:3px"></div><div class="r" style="left:734.8px;top:485.9px;width:75.2px;height:6px;background:#dc2626;border-radius:3px"></div><div class="r" style="left:826.8px;top:485.9px;width:75.2px;height:6px;background:#dc2626;border-radius:3px"></div><div class="r" style="left:918.8px;top:485.9px;width:75.2px;height:6px;background:#dc2626;border-radius:3px"></div><div class="r" style="left:1010.8px;top:485.9px;width:75.2px;height:6px;background:#dc2626;border-radius:3px"></div><div class="r" style="left:1102.8px;top:485.9px;width:19.200000000000045px;height:6px;background:#dc2626;border-radius:3px 0 0 3px"></div><div class="r" style="left:213px;top:499.0px;width:909px;height:52.89999999999998px;background:#333943"></div><div class="r" style="left:212.5px;top:499.0px;width:2.5px;height:52.89999999999998px;background:#1f7de6"></div><div class="t" style="left:226.5px;top:519.86px;font-size:10.8px;font-weight:bold;color:#fff;letter-spacing:-0.121px;">Project Manager</div><svg class="r" style="left:366.6px;top:518.5px;" width="12" height="11" viewBox="0 0 12 11"><g stroke="#86bbf0" stroke-width="1.1"><path d="M0.4 1.2 H11.2 M0.4 5.05 H11.2 M0.4 8.9 H7.2"/></g></svg><svg class="r" style="left:394.2px;top:521.8px;" width="11" height="7" viewBox="0 0 11 7"><path d="M1 1 L4.8 4.9 L8.6 1" fill="none" stroke="#86bbf0" stroke-width="1.1"/></svg><div class="r" style="left:421px;top:499.0px;width:1px;height:52.89999999999998px;background:#4b5872"></div><div class="r" style="left:450.5px;top:499.0px;width:1px;height:52.89999999999998px;background:#4b5872"></div><svg class="r" style="left:433px;top:509.4px;" width="12" height="12" viewBox="0 0 12 12"><g fill="none" stroke="#e6e6e6" stroke-width="1"><circle cx="5.05" cy="2.9" r="2.2"/><path d="M2.9 2.9 H7.2"/><path d="M1.2 10.2 V9 C1.2 7.3 2.6 6.5 4.6 6.5"/><path d="M1.2 10.2 H4.6"/><circle cx="8" cy="8.6" r="1.8"/><path d="M9.3 9.9 L10.7 11.3"/></g></svg><div class="r" style="left:451px;top:499.75px;width:94px;height:7.1px;background:repeating-linear-gradient(45deg, #a0a8b7 0px, #a0a8b7 2.6px, #c6c9cf 3.0px, #c6c9cf 3.5px, #a0a8b7 3.93px)"></div><div class="r" style="left:545px;top:499.75px;width:577px;height:7.1px;background:repeating-linear-gradient(45deg, #76787d 0px, #76787d 2.6px, #b6b6b7 3.0px, #b6b6b7 3.5px, #76787d 3.93px)"></div><div class="r" style="left:635.6px;top:499.75px;width:1px;height:7.1px;background:rgba(200,212,235,0.45)"></div><div class="r" style="left:727.4px;top:499.75px;width:1px;height:7.1px;background:rgba(200,212,235,0.45)"></div><div class="r" style="left:819.2px;top:499.75px;width:1px;height:7.1px;background:rgba(200,212,235,0.45)"></div><div class="r" style="left:911.0px;top:499.75px;width:1px;height:7.1px;background:rgba(200,212,235,0.45)"></div><div class="r" style="left:1002.8px;top:499.75px;width:1px;height:7.1px;background:rgba(200,212,235,0.45)"></div><div class="r" style="left:1094.6px;top:499.75px;width:1px;height:7.1px;background:rgba(200,212,235,0.45)"></div><div class="r" style="left:451px;top:506.85px;width:671px;height:27.3px;background:#2e333d;border-top:1px solid #8ec3f8;border-bottom:1px solid #8ec3f8;box-sizing:border-box;box-shadow:0 -0.5px 0 0.3px rgba(142,195,248,0.5), 0 0.5px 0 0.3px rgba(142,195,248,0.5)"></div><div class="r" style="left:451px;top:534.15px;width:94px;height:16.99999999999998px;background:repeating-linear-gradient(45deg, #a0a8b7 0px, #a0a8b7 2.6px, #c6c9cf 3.0px, #c6c9cf 3.5px, #a0a8b7 3.93px)"></div><div class="r" style="left:545px;top:534.15px;width:577px;height:16.99999999999998px;background:repeating-linear-gradient(45deg, #76787d 0px, #76787d 2.6px, #b6b6b7 3.0px, #b6b6b7 3.5px, #76787d 3.93px)"></div><div class="r" style="left:635.6px;top:534.15px;width:1px;height:16.99999999999998px;background:rgba(200,212,235,0.45)"></div><div class="r" style="left:727.4px;top:534.15px;width:1px;height:16.99999999999998px;background:rgba(200,212,235,0.45)"></div><div class="r" style="left:819.2px;top:534.15px;width:1px;height:16.99999999999998px;background:rgba(200,212,235,0.45)"></div><div class="r" style="left:911.0px;top:534.15px;width:1px;height:16.99999999999998px;background:rgba(200,212,235,0.45)"></div><div class="r" style="left:1002.8px;top:534.15px;width:1px;height:16.99999999999998px;background:rgba(200,212,235,0.45)"></div><div class="r" style="left:1094.6px;top:534.15px;width:1px;height:16.99999999999998px;background:rgba(200,212,235,0.45)"></div><svg class="r" style="left:459px;top:513.4px;" width="13" height="13" viewBox="0 0 13 13"><g fill="none" stroke="#e8e8e8" stroke-width="1"><circle cx="6.5" cy="6.5" r="5"/><path d="M6.3 5.8 V8.6 L7.3 8.8"/><circle cx="6.3" cy="4.3" r="0.35" fill="#e8e8e8"/></g></svg><div class="t" style="left:479.7px;top:514.56px;font-size:10.8px;font-weight:bold;color:#fff;letter-spacing:0.142px;">210h / 3,848h</div><div class="r" style="left:556px;top:513.2px;width:187.5px;height:14.6px;background:#464b56;border-radius:4px"></div><div class="r" style="left:556px;top:513.2px;width:10px;height:14.6px;background:#17a34a;border-radius:4px"></div><div class="t" style="left:561px;top:515.00px;font-size:9.45px;font-weight:bold;color:#fff;letter-spacing:-0.600px;-webkit-text-stroke:0.25px #fff">5%</div><div class="r" style="left:458.8px;top:539.0px;width:75.2px;height:6px;background:#454a55;border-radius:3px"></div><div class="r" style="left:515.8px;top:539.0px;width:18.2px;height:6px;background:#dc2626;border-radius:0 3px 3px 0"></div><div class="r" style="left:550.8px;top:539.0px;width:75.2px;height:6px;background:#454a55;border-radius:3px"></div><div class="r" style="left:607.8px;top:539.0px;width:18.2px;height:6px;background:#dc2626;border-radius:0 3px 3px 0"></div><div class="r" style="left:642.8px;top:539.0px;width:75.2px;height:6px;background:#454a55;border-radius:3px"></div><div class="r" style="left:699.8px;top:539.0px;width:18.2px;height:6px;background:#dc2626;border-radius:0 3px 3px 0"></div><div class="r" style="left:734.8px;top:539.0px;width:75.2px;height:6px;background:#454a55;border-radius:3px"></div><div class="r" style="left:791.8px;top:539.0px;width:18.2px;height:6px;background:#dc2626;border-radius:0 3px 3px 0"></div><div class="r" style="left:826.8px;top:539.0px;width:75.2px;height:6px;background:#dc2626;border-radius:3px"></div><div class="r" style="left:918.8px;top:539.0px;width:75.2px;height:6px;background:#dc2626;border-radius:3px"></div><div class="r" style="left:1010.8px;top:539.0px;width:75.2px;height:6px;background:#dc2626;border-radius:3px"></div><div class="r" style="left:1102.8px;top:539.0px;width:19.200000000000045px;height:6px;background:#dc2626;border-radius:3px 0 0 3px"></div><div class="r" style="left:213px;top:551.9px;width:909px;height:52.10000000000002px;background:#333943"></div><div class="r" style="left:212.5px;top:551.9px;width:2.5px;height:52.10000000000002px;background:#1f7de6"></div><div class="t" style="left:226.5px;top:572.76px;font-size:10.8px;font-weight:bold;color:#fff;letter-spacing:-0.133px;">Creative Lead</div><svg class="r" style="left:366.6px;top:571.4px;" width="12" height="11" viewBox="0 0 12 11"><g stroke="#86bbf0" stroke-width="1.1"><path d="M0.4 1.2 H11.2 M0.4 5.05 H11.2 M0.4 8.9 H7.2"/></g></svg><svg class="r" style="left:394.2px;top:574.6999999999999px;" width="11" height="7" viewBox="0 0 11 7"><path d="M1 1 L4.8 4.9 L8.6 1" fill="none" stroke="#86bbf0" stroke-width="1.1"/></svg><div class="r" style="left:421px;top:551.9px;width:1px;height:52.10000000000002px;background:#4b5872"></div><div class="r" style="left:450.5px;top:551.9px;width:1px;height:52.10000000000002px;background:#4b5872"></div><svg class="r" style="left:433px;top:562.3px;" width="12" height="12" viewBox="0 0 12 12"><g fill="none" stroke="#e6e6e6" stroke-width="1"><circle cx="5.05" cy="2.9" r="2.2"/><path d="M2.9 2.9 H7.2"/><path d="M1.2 10.2 V9 C1.2 7.3 2.6 6.5 4.6 6.5"/><path d="M1.2 10.2 H4.6"/><circle cx="8" cy="8.6" r="1.8"/><path d="M9.3 9.9 L10.7 11.3"/></g></svg><div class="r" style="left:451px;top:552.65px;width:94px;height:7.1px;background:repeating-linear-gradient(45deg, #a0a8b7 0px, #a0a8b7 2.6px, #c6c9cf 3.0px, #c6c9cf 3.5px, #a0a8b7 3.93px)"></div><div class="r" style="left:545px;top:552.65px;width:577px;height:7.1px;background:repeating-linear-gradient(45deg, #76787d 0px, #76787d 2.6px, #b6b6b7 3.0px, #b6b6b7 3.5px, #76787d 3.93px)"></div><div class="r" style="left:635.6px;top:552.65px;width:1px;height:7.1px;background:rgba(200,212,235,0.45)"></div><div class="r" style="left:727.4px;top:552.65px;width:1px;height:7.1px;background:rgba(200,212,235,0.45)"></div><div class="r" style="left:819.2px;top:552.65px;width:1px;height:7.1px;background:rgba(200,212,235,0.45)"></div><div class="r" style="left:911.0px;top:552.65px;width:1px;height:7.1px;background:rgba(200,212,235,0.45)"></div><div class="r" style="left:1002.8px;top:552.65px;width:1px;height:7.1px;background:rgba(200,212,235,0.45)"></div><div class="r" style="left:1094.6px;top:552.65px;width:1px;height:7.1px;background:rgba(200,212,235,0.45)"></div><div class="r" style="left:451px;top:559.75px;width:671px;height:27.3px;background:#2e333d;border-top:1px solid #8ec3f8;border-bottom:1px solid #8ec3f8;box-sizing:border-box;box-shadow:0 -0.5px 0 0.3px rgba(142,195,248,0.5), 0 0.5px 0 0.3px rgba(142,195,248,0.5)"></div><div class="r" style="left:451px;top:587.05px;width:94px;height:16.200000000000024px;background:repeating-linear-gradient(45deg, #a0a8b7 0px, #a0a8b7 2.6px, #c6c9cf 3.0px, #c6c9cf 3.5px, #a0a8b7 3.93px)"></div><div class="r" style="left:545px;top:587.05px;width:577px;height:16.200000000000024px;background:repeating-linear-gradient(45deg, #76787d 0px, #76787d 2.6px, #b6b6b7 3.0px, #b6b6b7 3.5px, #76787d 3.93px)"></div><div class="r" style="left:635.6px;top:587.05px;width:1px;height:16.200000000000024px;background:rgba(200,212,235,0.45)"></div><div class="r" style="left:727.4px;top:587.05px;width:1px;height:16.200000000000024px;background:rgba(200,212,235,0.45)"></div><div class="r" style="left:819.2px;top:587.05px;width:1px;height:16.200000000000024px;background:rgba(200,212,235,0.45)"></div><div class="r" style="left:911.0px;top:587.05px;width:1px;height:16.200000000000024px;background:rgba(200,212,235,0.45)"></div><div class="r" style="left:1002.8px;top:587.05px;width:1px;height:16.200000000000024px;background:rgba(200,212,235,0.45)"></div><div class="r" style="left:1094.6px;top:587.05px;width:1px;height:16.200000000000024px;background:rgba(200,212,235,0.45)"></div><svg class="r" style="left:459px;top:566.3px;" width="13" height="13" viewBox="0 0 13 13"><g fill="none" stroke="#e8e8e8" stroke-width="1"><circle cx="6.5" cy="6.5" r="5"/><path d="M6.3 5.8 V8.6 L7.3 8.8"/><circle cx="6.3" cy="4.3" r="0.35" fill="#e8e8e8"/></g></svg><div class="t" style="left:479.7px;top:567.46px;font-size:10.8px;font-weight:bold;color:#fff;letter-spacing:0.100px;">0h / 3,464h</div><div class="r" style="left:543.5px;top:566.1px;width:187.5px;height:14.6px;background:#464b56;border-radius:4px"></div><div class="t" style="left:548.5px;top:567.90px;font-size:9.45px;font-weight:bold;color:#fff;letter-spacing:-0.600px;-webkit-text-stroke:0.25px #fff">0%</div><div class="r" style="left:458.8px;top:591.9px;width:75.2px;height:6px;background:#dc2626;border-radius:3px"></div><div class="r" style="left:550.8px;top:591.9px;width:75.2px;height:6px;background:#dc2626;border-radius:3px"></div><div class="r" style="left:642.8px;top:591.9px;width:75.2px;height:6px;background:#dc2626;border-radius:3px"></div><div class="r" style="left:734.8px;top:591.9px;width:75.2px;height:6px;background:#dc2626;border-radius:3px"></div><div class="r" style="left:826.8px;top:591.9px;width:75.2px;height:6px;background:#dc2626;border-radius:3px"></div><div class="r" style="left:918.8px;top:591.9px;width:75.2px;height:6px;background:#dc2626;border-radius:3px"></div><div class="r" style="left:1010.8px;top:591.9px;width:75.2px;height:6px;background:#dc2626;border-radius:3px"></div><div class="r" style="left:1102.8px;top:591.9px;width:19.200000000000045px;height:6px;background:#dc2626;border-radius:3px 0 0 3px"></div><div class="r" style="left:213px;top:604.0px;width:909px;height:52.89999999999998px;background:#333943"></div><div class="r" style="left:212.5px;top:604.0px;width:2.5px;height:52.89999999999998px;background:#1f7de6"></div><div class="t" style="left:226.5px;top:624.86px;font-size:10.8px;font-weight:bold;color:#fff;letter-spacing:-0.133px;">Creative Lead</div><svg class="r" style="left:366.6px;top:623.5px;" width="12" height="11" viewBox="0 0 12 11"><g stroke="#86bbf0" stroke-width="1.1"><path d="M0.4 1.2 H11.2 M0.4 5.05 H11.2 M0.4 8.9 H7.2"/></g></svg><svg class="r" style="left:394.2px;top:626.8px;" width="11" height="7" viewBox="0 0 11 7"><path d="M1 1 L4.8 4.9 L8.6 1" fill="none" stroke="#86bbf0" stroke-width="1.1"/></svg><div class="r" style="left:421px;top:604.0px;width:1px;height:52.89999999999998px;background:#4b5872"></div><div class="r" style="left:450.5px;top:604.0px;width:1px;height:52.89999999999998px;background:#4b5872"></div><svg class="r" style="left:433px;top:614.4px;" width="12" height="12" viewBox="0 0 12 12"><g fill="none" stroke="#e6e6e6" stroke-width="1"><circle cx="5.05" cy="2.9" r="2.2"/><path d="M2.9 2.9 H7.2"/><path d="M1.2 10.2 V9 C1.2 7.3 2.6 6.5 4.6 6.5"/><path d="M1.2 10.2 H4.6"/><circle cx="8" cy="8.6" r="1.8"/><path d="M9.3 9.9 L10.7 11.3"/></g></svg><div class="r" style="left:451px;top:604.75px;width:94px;height:7.1px;background:repeating-linear-gradient(45deg, #a0a8b7 0px, #a0a8b7 2.6px, #c6c9cf 3.0px, #c6c9cf 3.5px, #a0a8b7 3.93px)"></div><div class="r" style="left:545px;top:604.75px;width:577px;height:7.1px;background:repeating-linear-gradient(45deg, #76787d 0px, #76787d 2.6px, #b6b6b7 3.0px, #b6b6b7 3.5px, #76787d 3.93px)"></div><div class="r" style="left:635.6px;top:604.75px;width:1px;height:7.1px;background:rgba(200,212,235,0.45)"></div><div class="r" style="left:727.4px;top:604.75px;width:1px;height:7.1px;background:rgba(200,212,235,0.45)"></div><div class="r" style="left:819.2px;top:604.75px;width:1px;height:7.1px;background:rgba(200,212,235,0.45)"></div><div class="r" style="left:911.0px;top:604.75px;width:1px;height:7.1px;background:rgba(200,212,235,0.45)"></div><div class="r" style="left:1002.8px;top:604.75px;width:1px;height:7.1px;background:rgba(200,212,235,0.45)"></div><div class="r" style="left:1094.6px;top:604.75px;width:1px;height:7.1px;background:rgba(200,212,235,0.45)"></div><div class="r" style="left:451px;top:611.85px;width:671px;height:27.3px;background:#2e333d;border-top:1px solid #8ec3f8;border-bottom:1px solid #8ec3f8;box-sizing:border-box;box-shadow:0 -0.5px 0 0.3px rgba(142,195,248,0.5), 0 0.5px 0 0.3px rgba(142,195,248,0.5)"></div><div class="r" style="left:451px;top:639.15px;width:94px;height:16.99999999999998px;background:repeating-linear-gradient(45deg, #a0a8b7 0px, #a0a8b7 2.6px, #c6c9cf 3.0px, #c6c9cf 3.5px, #a0a8b7 3.93px)"></div><div class="r" style="left:545px;top:639.15px;width:577px;height:16.99999999999998px;background:repeating-linear-gradient(45deg, #76787d 0px, #76787d 2.6px, #b6b6b7 3.0px, #b6b6b7 3.5px, #76787d 3.93px)"></div><div class="r" style="left:635.6px;top:639.15px;width:1px;height:16.99999999999998px;background:rgba(200,212,235,0.45)"></div><div class="r" style="left:727.4px;top:639.15px;width:1px;height:16.99999999999998px;background:rgba(200,212,235,0.45)"></div><div class="r" style="left:819.2px;top:639.15px;width:1px;height:16.99999999999998px;background:rgba(200,212,235,0.45)"></div><div class="r" style="left:911.0px;top:639.15px;width:1px;height:16.99999999999998px;background:rgba(200,212,235,0.45)"></div><div class="r" style="left:1002.8px;top:639.15px;width:1px;height:16.99999999999998px;background:rgba(200,212,235,0.45)"></div><div class="r" style="left:1094.6px;top:639.15px;width:1px;height:16.99999999999998px;background:rgba(200,212,235,0.45)"></div><svg class="r" style="left:459px;top:618.4px;" width="13" height="13" viewBox="0 0 13 13"><g fill="none" stroke="#e8e8e8" stroke-width="1"><circle cx="6.5" cy="6.5" r="5"/><path d="M6.3 5.8 V8.6 L7.3 8.8"/><circle cx="6.3" cy="4.3" r="0.35" fill="#e8e8e8"/></g></svg><div class="t" style="left:479.7px;top:619.56px;font-size:10.8px;font-weight:bold;color:#fff;letter-spacing:0.100px;">11,784h / 3,848h</div><div class="r" style="left:571px;top:618.2px;width:187.5px;height:14.6px;background:#464b56;border-radius:4px"></div><div class="r" style="left:571px;top:618.2px;width:188px;height:14.6px;background:#17a34a;border-radius:4px"></div><div class="t" style="left:576px;top:620.00px;font-size:9.45px;font-weight:bold;color:#fff;letter-spacing:-0.333px;-webkit-text-stroke:0.25px #fff">306%</div><div class="r" style="left:458.8px;top:645.0px;width:75.2px;height:5px;background:#a52fd8;border-radius:3px"></div><div class="r" style="left:550.8px;top:645.0px;width:75.2px;height:5px;background:#a52fd8;border-radius:3px"></div><div class="r" style="left:642.8px;top:645.0px;width:75.2px;height:5px;background:#a52fd8;border-radius:3px"></div><div class="r" style="left:734.8px;top:645.0px;width:75.2px;height:5px;background:#a52fd8;border-radius:3px"></div><div class="r" style="left:826.8px;top:645.0px;width:75.2px;height:5px;background:#a52fd8;border-radius:3px"></div><div class="r" style="left:918.8px;top:645.0px;width:75.2px;height:5px;background:#a52fd8;border-radius:3px"></div><div class="r" style="left:1010.8px;top:645.0px;width:75.2px;height:5px;background:#a52fd8;border-radius:3px"></div><div class="r" style="left:1102.8px;top:645.0px;width:19.200000000000045px;height:5px;background:#a52fd8;border-radius:3px 0 0 3px"></div><div class="r" style="left:213px;top:656.9px;width:909px;height:53.05000000000007px;background:#333943"></div><div class="r" style="left:212.5px;top:656.9px;width:2.5px;height:53.05000000000007px;background:#1f7de6"></div><div class="t" style="left:226.5px;top:677.76px;font-size:10.8px;font-weight:bold;color:#fff;letter-spacing:-0.314px;">Designer</div><svg class="r" style="left:366.6px;top:676.4px;" width="12" height="11" viewBox="0 0 12 11"><g stroke="#86bbf0" stroke-width="1.1"><path d="M0.4 1.2 H11.2 M0.4 5.05 H11.2 M0.4 8.9 H7.2"/></g></svg><svg class="r" style="left:394.2px;top:679.6999999999999px;" width="11" height="7" viewBox="0 0 11 7"><path d="M1 1 L4.8 4.9 L8.6 1" fill="none" stroke="#86bbf0" stroke-width="1.1"/></svg><div class="r" style="left:421px;top:656.9px;width:1px;height:53.05000000000007px;background:#4b5872"></div><div class="r" style="left:450.5px;top:656.9px;width:1px;height:53.05000000000007px;background:#4b5872"></div><svg class="r" style="left:433px;top:667.3px;" width="12" height="12" viewBox="0 0 12 12"><g fill="none" stroke="#e6e6e6" stroke-width="1"><circle cx="5.05" cy="2.9" r="2.2"/><path d="M2.9 2.9 H7.2"/><path d="M1.2 10.2 V9 C1.2 7.3 2.6 6.5 4.6 6.5"/><path d="M1.2 10.2 H4.6"/><circle cx="8" cy="8.6" r="1.8"/><path d="M9.3 9.9 L10.7 11.3"/></g></svg><div class="r" style="left:451px;top:657.65px;width:94px;height:7.1px;background:repeating-linear-gradient(45deg, #a0a8b7 0px, #a0a8b7 2.6px, #c6c9cf 3.0px, #c6c9cf 3.5px, #a0a8b7 3.93px)"></div><div class="r" style="left:545px;top:657.65px;width:577px;height:7.1px;background:repeating-linear-gradient(45deg, #76787d 0px, #76787d 2.6px, #b6b6b7 3.0px, #b6b6b7 3.5px, #76787d 3.93px)"></div><div class="r" style="left:635.6px;top:657.65px;width:1px;height:7.1px;background:rgba(200,212,235,0.45)"></div><div class="r" style="left:727.4px;top:657.65px;width:1px;height:7.1px;background:rgba(200,212,235,0.45)"></div><div class="r" style="left:819.2px;top:657.65px;width:1px;height:7.1px;background:rgba(200,212,235,0.45)"></div><div class="r" style="left:911.0px;top:657.65px;width:1px;height:7.1px;background:rgba(200,212,235,0.45)"></div><div class="r" style="left:1002.8px;top:657.65px;width:1px;height:7.1px;background:rgba(200,212,235,0.45)"></div><div class="r" style="left:1094.6px;top:657.65px;width:1px;height:7.1px;background:rgba(200,212,235,0.45)"></div><div class="r" style="left:451px;top:664.75px;width:671px;height:27.3px;background:#2e333d;border-top:1px solid #8ec3f8;border-bottom:1px solid #8ec3f8;box-sizing:border-box;box-shadow:0 -0.5px 0 0.3px rgba(142,195,248,0.5), 0 0.5px 0 0.3px rgba(142,195,248,0.5)"></div><div class="r" style="left:451px;top:692.05px;width:94px;height:17.15000000000007px;background:repeating-linear-gradient(45deg, #a0a8b7 0px, #a0a8b7 2.6px, #c6c9cf 3.0px, #c6c9cf 3.5px, #a0a8b7 3.93px)"></div><div class="r" style="left:545px;top:692.05px;width:577px;height:17.15000000000007px;background:repeating-linear-gradient(45deg, #76787d 0px, #76787d 2.6px, #b6b6b7 3.0px, #b6b6b7 3.5px, #76787d 3.93px)"></div><div class="r" style="left:635.6px;top:692.05px;width:1px;height:17.15000000000007px;background:rgba(200,212,235,0.45)"></div><div class="r" style="left:727.4px;top:692.05px;width:1px;height:17.15000000000007px;background:rgba(200,212,235,0.45)"></div><div class="r" style="left:819.2px;top:692.05px;width:1px;height:17.15000000000007px;background:rgba(200,212,235,0.45)"></div><div class="r" style="left:911.0px;top:692.05px;width:1px;height:17.15000000000007px;background:rgba(200,212,235,0.45)"></div><div class="r" style="left:1002.8px;top:692.05px;width:1px;height:17.15000000000007px;background:rgba(200,212,235,0.45)"></div><div class="r" style="left:1094.6px;top:692.05px;width:1px;height:17.15000000000007px;background:rgba(200,212,235,0.45)"></div><svg class="r" style="left:459px;top:671.3px;" width="13" height="13" viewBox="0 0 13 13"><g fill="none" stroke="#e8e8e8" stroke-width="1"><circle cx="6.5" cy="6.5" r="5"/><path d="M6.3 5.8 V8.6 L7.3 8.8"/><circle cx="6.3" cy="4.3" r="0.35" fill="#e8e8e8"/></g></svg><div class="t" style="left:479.7px;top:672.46px;font-size:10.8px;font-weight:bold;color:#fff;letter-spacing:0.100px;">0h / 3,848h</div><div class="r" style="left:543.5px;top:671.1px;width:187.5px;height:14.6px;background:#464b56;border-radius:4px"></div><div class="t" style="left:548.5px;top:672.90px;font-size:9.45px;font-weight:bold;color:#fff;letter-spacing:-0.600px;-webkit-text-stroke:0.25px #fff">0%</div><div class="r" style="left:458.8px;top:696.9px;width:75.2px;height:6px;background:#dc2626;border-radius:3px"></div><div class="r" style="left:550.8px;top:696.9px;width:75.2px;height:6px;background:#dc2626;border-radius:3px"></div><div class="r" style="left:642.8px;top:696.9px;width:75.2px;height:6px;background:#dc2626;border-radius:3px"></div><div class="r" style="left:734.8px;top:696.9px;width:75.2px;height:6px;background:#dc2626;border-radius:3px"></div><div class="r" style="left:826.8px;top:696.9px;width:75.2px;height:6px;background:#dc2626;border-radius:3px"></div><div class="r" style="left:918.8px;top:696.9px;width:75.2px;height:6px;background:#dc2626;border-radius:3px"></div><div class="r" style="left:1010.8px;top:696.9px;width:75.2px;height:6px;background:#dc2626;border-radius:3px"></div><div class="r" style="left:1102.8px;top:696.9px;width:19.200000000000045px;height:6px;background:#dc2626;border-radius:3px 0 0 3px"></div><div class="r" style="left:213px;top:709.95px;width:909px;height:51.44999999999993px;background:#333943"></div><div class="r" style="left:212.5px;top:709.95px;width:2.5px;height:51.44999999999993px;background:#1f7de6"></div><div class="t" style="left:226.5px;top:730.81px;font-size:10.8px;font-weight:bold;color:#fff;letter-spacing:-0.237px;">Developer</div><svg class="r" style="left:366.6px;top:729.45px;" width="12" height="11" viewBox="0 0 12 11"><g stroke="#86bbf0" stroke-width="1.1"><path d="M0.4 1.2 H11.2 M0.4 5.05 H11.2 M0.4 8.9 H7.2"/></g></svg><svg class="r" style="left:394.2px;top:732.75px;" width="11" height="7" viewBox="0 0 11 7"><path d="M1 1 L4.8 4.9 L8.6 1" fill="none" stroke="#86bbf0" stroke-width="1.1"/></svg><div class="r" style="left:421px;top:709.95px;width:1px;height:51.44999999999993px;background:#4b5872"></div><div class="r" style="left:450.5px;top:709.95px;width:1px;height:51.44999999999993px;background:#4b5872"></div><svg class="r" style="left:433px;top:720.35px;" width="12" height="12" viewBox="0 0 12 12"><g fill="none" stroke="#e6e6e6" stroke-width="1"><circle cx="5.05" cy="2.9" r="2.2"/><path d="M2.9 2.9 H7.2"/><path d="M1.2 10.2 V9 C1.2 7.3 2.6 6.5 4.6 6.5"/><path d="M1.2 10.2 H4.6"/><circle cx="8" cy="8.6" r="1.8"/><path d="M9.3 9.9 L10.7 11.3"/></g></svg><div class="r" style="left:451px;top:710.7px;width:94px;height:7.1px;background:repeating-linear-gradient(45deg, #a0a8b7 0px, #a0a8b7 2.6px, #c6c9cf 3.0px, #c6c9cf 3.5px, #a0a8b7 3.93px)"></div><div class="r" style="left:545px;top:710.7px;width:577px;height:7.1px;background:repeating-linear-gradient(45deg, #76787d 0px, #76787d 2.6px, #b6b6b7 3.0px, #b6b6b7 3.5px, #76787d 3.93px)"></div><div class="r" style="left:635.6px;top:710.7px;width:1px;height:7.1px;background:rgba(200,212,235,0.45)"></div><div class="r" style="left:727.4px;top:710.7px;width:1px;height:7.1px;background:rgba(200,212,235,0.45)"></div><div class="r" style="left:819.2px;top:710.7px;width:1px;height:7.1px;background:rgba(200,212,235,0.45)"></div><div class="r" style="left:911.0px;top:710.7px;width:1px;height:7.1px;background:rgba(200,212,235,0.45)"></div><div class="r" style="left:1002.8px;top:710.7px;width:1px;height:7.1px;background:rgba(200,212,235,0.45)"></div><div class="r" style="left:1094.6px;top:710.7px;width:1px;height:7.1px;background:rgba(200,212,235,0.45)"></div><div class="r" style="left:451px;top:717.8000000000001px;width:671px;height:27.3px;background:#2e333d;border-top:1px solid #8ec3f8;border-bottom:1px solid #8ec3f8;box-sizing:border-box;box-shadow:0 -0.5px 0 0.3px rgba(142,195,248,0.5), 0 0.5px 0 0.3px rgba(142,195,248,0.5)"></div><div class="r" style="left:451px;top:745.1px;width:94px;height:15.549999999999933px;background:repeating-linear-gradient(45deg, #a0a8b7 0px, #a0a8b7 2.6px, #c6c9cf 3.0px, #c6c9cf 3.5px, #a0a8b7 3.93px)"></div><div class="r" style="left:545px;top:745.1px;width:577px;height:15.549999999999933px;background:repeating-linear-gradient(45deg, #76787d 0px, #76787d 2.6px, #b6b6b7 3.0px, #b6b6b7 3.5px, #76787d 3.93px)"></div><div class="r" style="left:635.6px;top:745.1px;width:1px;height:15.549999999999933px;background:rgba(200,212,235,0.45)"></div><div class="r" style="left:727.4px;top:745.1px;width:1px;height:15.549999999999933px;background:rgba(200,212,235,0.45)"></div><div class="r" style="left:819.2px;top:745.1px;width:1px;height:15.549999999999933px;background:rgba(200,212,235,0.45)"></div><div class="r" style="left:911.0px;top:745.1px;width:1px;height:15.549999999999933px;background:rgba(200,212,235,0.45)"></div><div class="r" style="left:1002.8px;top:745.1px;width:1px;height:15.549999999999933px;background:rgba(200,212,235,0.45)"></div><div class="r" style="left:1094.6px;top:745.1px;width:1px;height:15.549999999999933px;background:rgba(200,212,235,0.45)"></div><svg class="r" style="left:459px;top:724.35px;" width="13" height="13" viewBox="0 0 13 13"><g fill="none" stroke="#e8e8e8" stroke-width="1"><circle cx="6.5" cy="6.5" r="5"/><path d="M6.3 5.8 V8.6 L7.3 8.8"/><circle cx="6.3" cy="4.3" r="0.35" fill="#e8e8e8"/></g></svg><div class="t" style="left:479.7px;top:725.51px;font-size:10.8px;font-weight:bold;color:#fff;letter-spacing:0.100px;">0h / 3,848h</div><div class="r" style="left:543.5px;top:724.1500000000001px;width:187.5px;height:14.6px;background:#464b56;border-radius:4px"></div><div class="t" style="left:548.5px;top:725.95px;font-size:9.45px;font-weight:bold;color:#fff;letter-spacing:-0.600px;-webkit-text-stroke:0.25px #fff">0%</div><div class="r" style="left:458.8px;top:749.95px;width:75.2px;height:6px;background:#dc2626;border-radius:3px"></div><div class="r" style="left:550.8px;top:749.95px;width:75.2px;height:6px;background:#dc2626;border-radius:3px"></div><div class="r" style="left:642.8px;top:749.95px;width:75.2px;height:6px;background:#dc2626;border-radius:3px"></div><div class="r" style="left:734.8px;top:749.95px;width:75.2px;height:6px;background:#dc2626;border-radius:3px"></div><div class="r" style="left:826.8px;top:749.95px;width:75.2px;height:6px;background:#dc2626;border-radius:3px"></div><div class="r" style="left:918.8px;top:749.95px;width:75.2px;height:6px;background:#dc2626;border-radius:3px"></div><div class="r" style="left:1010.8px;top:749.95px;width:75.2px;height:6px;background:#dc2626;border-radius:3px"></div><div class="r" style="left:1102.8px;top:749.95px;width:19.200000000000045px;height:6px;background:#dc2626;border-radius:3px 0 0 3px"></div><div class="r" style="left:213px;top:158.5px;width:909px;height:1.5px;background:#4b5a76"></div><div class="r" style="left:213px;top:196.75px;width:909px;height:1.5px;background:#4b5a76"></div><div class="r" style="left:213px;top:249.25px;width:909px;height:1.5px;background:#4b5a76"></div><div class="r" style="left:213px;top:302.15px;width:909px;height:1.5px;background:#4b5a76"></div><div class="r" style="left:213px;top:340.7px;width:909px;height:1.5px;background:#4b5a76"></div><div class="r" style="left:213px;top:393.15px;width:909px;height:1.5px;background:#4b5a76"></div><div class="r" style="left:213px;top:445.15px;width:909px;height:1.5px;background:#4b5a76"></div><div class="r" style="left:213px;top:498.25px;width:909px;height:1.5px;background:#4b5a76"></div><div class="r" style="left:213px;top:551.15px;width:909px;height:1.5px;background:#4b5a76"></div><div class="r" style="left:213px;top:603.25px;width:909px;height:1.5px;background:#4b5a76"></div><div class="r" style="left:213px;top:656.15px;width:909px;height:1.5px;background:#4b5a76"></div><div class="r" style="left:213px;top:709.2px;width:909px;height:1.5px;background:#4b5a76"></div><div class="r" style="left:213px;top:760.65px;width:909px;height:1.5px;background:#4b5a76"></div><div class="r" style="left:213px;top:762px;width:909px;height:40px;background:#171c26"></div><div class="r" style="left:213px;top:802.5px;width:909px;height:7.5px;background:#3a3f49"></div><div class="r" style="left:612px;top:803px;width:304px;height:7px;background:#4e5b74"></div><div class="r" style="left:212px;top:802px;width:911px;height:1px;background:#4b5872"></div><div class="r" style="left:1123px;top:64px;width:11px;height:758px;background:#171c26"></div><div class="r" style="left:1122px;top:64px;width:1px;height:746px;background:#4b5872"></div>
</body></html>
